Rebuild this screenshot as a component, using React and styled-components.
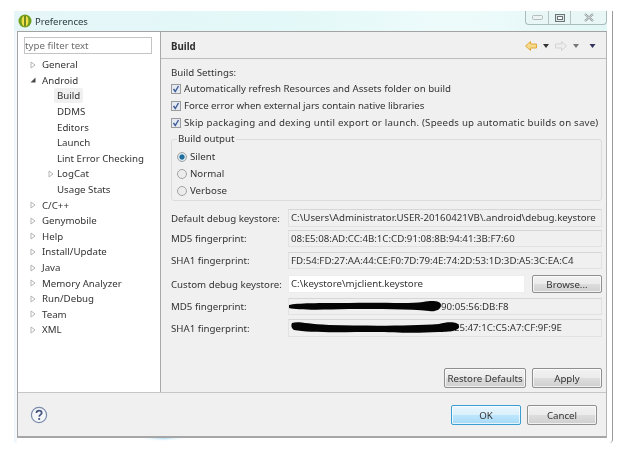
import React from "react";
import styled, { createGlobalStyle } from "styled-components";

const GlobalStyle = createGlobalStyle`
  html, body {
    margin: 0;
    padding: 0;
    background: #fff;
  }
  body {
    font-family: "Noto Sans", "Open Sans", sans-serif;
    font-size: 9.7px;
    color: #333;
  }
`;

const Page = styled.div`
  width: 644px;
  height: 456px;
  padding: 11px 0 0 14px;
  box-sizing: border-box;
  overflow: hidden;
  filter: blur(0.35px);
`;

const Frame = styled.div`
  width: 599px;
  height: 432px;
  padding-right: 5px;
  box-sizing: border-box;
  border-right: 1px solid #9a9a9a;
  border-bottom-right-radius: 4px;
  background: linear-gradient(90deg, #eef5fb 0, #f7fafd 3px, #fff 3px);
`;

const TitleBar = styled.div`
  height: 20px;
  width: 593px;
  display: flex;
  align-items: flex-start;
  background: linear-gradient(90deg, #e6f6f8 0%, #e3f8f8 45%, #eefbfb 75%, #e2f6f6 100%);
`;

const AppTitle = styled.div`
  display: flex;
  align-items: center;
  gap: 3px;
  height: 18px;
  margin: 1px 0 0 4px;
  font-size: 9.5px;
  color: #2c3a3e;
`;

const WindowButtons = styled.div`
  display: flex;
  height: 13px;
  margin-left: auto;
  border: 1px solid #a9bcbc;
  border-top: 0;
  border-radius: 0 0 4px 4px;
  background: #e9f6f6;
`;

const WindowButton = styled.div`
  width: ${(p) => p.$w}px;
  display: flex;
  align-items: center;
  justify-content: center;
  border-left: ${(p) => (p.$first ? "0" : "1px solid #b4c4c4")};
`;

const Panel = styled.div`
  width: 590px;
  height: 407px;
  margin-left: 3px;
  box-sizing: border-box;
  border: 1px solid #a3a3a3;
  border-right: 1px solid #b5b5b5;
  border-bottom: 2px solid #a6a6a6;
  background: #f0f0f0;
  display: flex;
  flex-direction: column;
`;

const BottomGlow = styled.div`
  width: 590px;
  height: 3px;
  margin-left: 3px;
  background: radial-gradient(ellipse 22px 3px at 146px 0, #b5def7 0, #eef8fd 60%, transparent 100%);
`;

const Main = styled.div`
  height: 360px;
  flex: none;
  display: flex;
  border-bottom: 1px solid #c6c6c6;
`;

const Sidebar = styled.div`
  width: 143px;
  flex: none;
  background: #fff;
  border-right: 1px solid #a8a8a8;
  padding: 5px 0 0 6px;
  box-sizing: border-box;
`;

const Filter = styled.div`
  width: 128px;
  height: 17px;
  box-sizing: border-box;
  border: 1px solid #c4c4c4;
  line-height: 15px;
  color: #6d6d6d;
  margin-bottom: 3px;
`;

const Tree = styled.ul`
  list-style: none;
  margin: 0;
  padding: 0;
`;

const TreeRow = styled.li`
  height: 15.6px;
  display: flex;
  align-items: center;
  padding-left: ${(p) => (p.$depth ? 18 + (p.$depth - 1) * 6 : 6)}px;
`;

const Twisty = styled.span`
  width: ${(p) => (p.$nested ? 9 : 12)}px;
  flex: none;
  display: flex;
  align-items: center;
`;

const TreeLabel = styled.span`
  white-space: nowrap;
  margin-left: ${(p) => (p.$depth === 1 ? 15 : 0)}px;
  padding: ${(p) => (p.$selected ? "0 3px" : "0")};
  transform: translateX(${(p) => (p.$selected ? "-3px" : "0")});
  background: ${(p) => (p.$selected ? "#f0f0f0" : "transparent")};
  border-radius: 2px;
  line-height: 15px;
`;

const Content = styled.div`
  flex: 1;
  min-width: 0;
  display: flex;
  flex-direction: column;
`;

const Header = styled.div`
  height: 27px;
  flex: none;
  box-sizing: border-box;
  display: flex;
  align-items: center;
  padding: 2px 10px 0 10px;
  border-bottom: 1px solid #bdbdbd;
`;

const HeaderTitle = styled.div`
  font-weight: 700;
  color: #2e2e2e;
`;

const Nav = styled.div`
  margin-left: auto;
  display: flex;
  align-items: center;
`;

const Body = styled.div`
  flex: 1;
  padding: 6px 4px 0 10px;
  display: flex;
  flex-direction: column;
`;

const SectionLabel = styled.div`
  height: 15px;
  line-height: 15px;
`;

const CheckRow = styled.label`
  height: 17px;
  display: flex;
  align-items: center;
  gap: 3px;
  white-space: nowrap;
  letter-spacing: ${(p) => p.$spacing || 0}px;
`;

const CheckBox = styled.span`
  width: 8px;
  height: 8px;
  flex: none;
  border: 1px solid #9b9b9b;
  background: #e4e9f2;
  display: flex;
  align-items: center;
  justify-content: center;
`;

const GroupBox = styled.fieldset`
  margin: 2px 0 3px;
  padding: 3px 0 0 5px;
  height: 68px;
  box-sizing: border-box;
  border: 1px solid #dcdcdc;
  border-radius: 3px;
  min-width: 0;
`;

const Legend = styled.legend`
  padding: 0 1px;
  line-height: 12px;
`;

const RadioRow = styled.label`
  height: 17px;
  display: flex;
  align-items: center;
  gap: 3px;
`;

const Radio = styled.span`
  width: 8px;
  height: 8px;
  flex: none;
  border-radius: 50%;
  border: 1px solid #a3a3a3;
  background: ${(p) => (p.$on ? "radial-gradient(circle, #1e6f9e 0 2.2px, #d9e6ee 3px)" : "#ececec")};
`;

const Rows = styled.div`
  margin-top: 5px;
  display: flex;
  flex-direction: column;
`;

const Row = styled.div`
  display: grid;
  grid-template-columns: 117px 314px;
  align-items: center;
  margin-top: ${(p) => p.$gap}px;
`;

const Field = styled.div`
  position: relative;
  height: ${(p) => p.$h || 18}px;
  box-sizing: border-box;
  padding-left: ${(p) => p.$inset || 2}px;
  border: 1px solid #e2e2e2;
  border-top-color: #d6d6d6;
  line-height: ${(p) => (p.$h || 18) - 2}px;
  white-space: nowrap;
  overflow: hidden;
`;

const Redaction = styled.svg`
  position: absolute;
  left: 0;
  top: 0;
`;

const KeystoreRow = styled.div`
  display: grid;
  grid-template-columns: 117px 237px 77px;
  align-items: center;
  margin-top: 6px;
`;

const KeystoreInput = styled.div`
  width: 237px;
  height: 18px;
  box-sizing: border-box;
  background: #fff;
  padding-left: 2px;
  line-height: 16px;
  border: 1px solid #ededed;
`;

const Button = styled.button`
  width: ${(p) => p.$w}px;
  height: ${(p) => p.$h || 19}px;
  padding: 0;
  font-family: inherit;
  font-size: 9.7px;
  white-space: nowrap;
  color: #333;
  border: 1px solid ${(p) => (p.$primary ? "#3a9fd0" : "#8f8f8f")};
  border-radius: 2px;
  background: ${(p) =>
    p.$primary
      ? "linear-gradient(#eaf6fd 0%, #d9f0fc 50%, #bde6fd 52%, #a7d9f5 100%)"
      : "linear-gradient(#f2f2f2 0%, #ebebeb 50%, #dddddd 52%, #cfcfcf 100%)"};
  box-shadow: inset 0 0 0 1px rgba(255, 255, 255, 0.7);
`;

const BrowseSlot = styled.div`
  display: flex;
  margin-left: 7px;
`;

const Actions = styled.div`
  display: flex;
  justify-content: flex-end;
  gap: 6px;
  margin-top: ${(p) => p.$top}px;
`;

const Footer = styled.div`
  flex: 1;
  display: flex;
  align-items: center;
  justify-content: space-between;
  padding: 1px 9px 0 12px;
`;

const NavCaret = styled.svg`
  margin-left: ${(p) => p.$ml || 0}px;
  margin-right: ${(p) => p.$mr || 0}px;
`;

const Triangle = ({ open }) => (
  <svg width="6" height="8" viewBox="0 0 6 8">
    {open ? (
      <path d="M5.5 1.5V6.5H0.5Z" fill="#4a4a4a" />
    ) : (
      <path d="M1 1L5 4L1 7Z" fill="#fff" stroke="#b5b5b5" />
    )}
  </svg>
);

const tree = [
  { label: "General", arrow: "closed" },
  { label: "Android", arrow: "open" },
  { label: "Build", depth: 1, selected: true },
  { label: "DDMS", depth: 1 },
  { label: "Editors", depth: 1 },
  { label: "Launch", depth: 1 },
  { label: "Lint Error Checking", depth: 1 },
  { label: "LogCat", depth: 2, arrow: "closed" },
  { label: "Usage Stats", depth: 1 },
  { label: "C/C++", arrow: "closed" },
  { label: "Genymobile", arrow: "closed" },
  { label: "Help", arrow: "closed" },
  { label: "Install/Update", arrow: "closed" },
  { label: "Java", arrow: "closed" },
  { label: "Memory Analyzer", arrow: "closed" },
  { label: "Run/Debug", arrow: "closed" },
  { label: "Team", arrow: "closed" },
  { label: "XML", arrow: "closed" },
];

const settings = [
  { text: "Automatically refresh Resources and Assets folder on build" },
  { text: "Force error when external jars contain native libraries", spacing: -0.05 },
  { text: "Skip packaging and dexing until export or launch. (Speeds up automatic builds on save)", spacing: 0.21 },
];

const Tick = () => (
  <svg width="8" height="8" viewBox="0 0 8 8">
    <path d="M1.5 4L3.3 6.5L6.5 1" fill="none" stroke="#3d5a94" strokeWidth="1.4" />
  </svg>
);

const EclipseLogo = () => (
  <svg width="14" height="14" viewBox="0 0 14 14">
    <circle cx="7" cy="7" r="6.5" fill="#6f9e1c" />
    <ellipse cx="7" cy="7" rx="3.4" ry="5.6" fill="#f2e24a" />
    <path d="M7 1.5V12.5" stroke="#4f7414" strokeWidth="1.6" />
  </svg>
);

const ArrowIcon = ({ dir, fill, stroke }) => (
  <svg width="12" height="10" viewBox="0 0 12 10">
    <path
      d={dir === "left" ? "M0.5 5L5.5 0.5V3H11.5V7H5.5V9.5Z" : "M11.5 5L6.5 0.5V3H0.5V7H6.5V9.5Z"}
      fill={fill}
      stroke={stroke}
    />
  </svg>
);

const Caret = ({ fill, w = 6, ml, mr }) => (
  <NavCaret width={w} height="4" viewBox="0 0 6 4" $ml={ml} $mr={mr}>
    <path d="M0 0H6L3 4Z" fill={fill} />
  </NavCaret>
);

const HelpIcon = () => (
  <svg width="18" height="18" viewBox="0 0 18 18">
    <circle cx="9" cy="9" r="7.6" fill="#f4f6fa" stroke="#7c8cab" strokeWidth="1.2" />
    <path
      d="M6.4 7C6.5 5.4 7.6 4.6 9 4.6C10.6 4.6 11.7 5.5 11.7 6.9C11.7 8.6 9.3 8.7 9.2 10.6"
      fill="none"
      stroke="#44557e"
      strokeWidth="1.7"
    />
    <circle cx="9.2" cy="13" r="1.1" fill="#44557e" />
  </svg>
);

const App = () => (
  <>
    <GlobalStyle />
    <Page>
      <Frame>
        <TitleBar>
          <AppTitle>
            <EclipseLogo />
            Preferences
          </AppTitle>
          <WindowButtons>
            <WindowButton $w={22} $first>
              <svg width="11" height="5" viewBox="0 0 11 5">
                <rect x="0.5" y="0.5" width="10" height="4" rx="1" fill="#edf3f3" stroke="#b4bcbc" />
              </svg>
            </WindowButton>
            <WindowButton $w={21}>
              <svg width="10" height="8" viewBox="0 0 10 8">
                <rect x="0.5" y="0.5" width="9" height="7" fill="#dfe6e6" stroke="#6d7676" />
                <rect x="2.5" y="2.5" width="5" height="3" fill="#f4f8f8" stroke="#6d7676" />
              </svg>
            </WindowButton>
            <WindowButton $w={35}>
              <svg width="10" height="9" viewBox="0 0 10 9">
                <path d="M1 1L9 8M9 1L1 8" stroke="#8a9393" strokeWidth="2.2" />
                <path d="M1 1L9 8M9 1L1 8" stroke="#eef2f2" strokeWidth="0.8" />
              </svg>
            </WindowButton>
          </WindowButtons>
        </TitleBar>
        <Panel>
          <Main>
            <Sidebar>
              <Filter>type filter text</Filter>
              <Tree>
                {tree.map((item) => (
                  <TreeRow key={item.label} $depth={item.depth}>
                    {item.arrow && (
                      <Twisty $nested={item.depth}>
                        <Triangle open={item.arrow === "open"} />
                      </Twisty>
                    )}
                    <TreeLabel $depth={item.depth} $selected={item.selected}>
                      {item.label}
                    </TreeLabel>
                  </TreeRow>
                ))}
              </Tree>
            </Sidebar>
            <Content>
              <Header>
                <HeaderTitle>Build</HeaderTitle>
                <Nav>
                  <ArrowIcon dir="left" fill="#f7d98c" stroke="#e0a93c" />
                  <Caret fill="#333" ml={6} mr={6} />
                  <ArrowIcon dir="right" fill="#eeeeee" stroke="#d3d3d3" />
                  <Caret fill="#777" ml={6} mr={10} />
                  <Caret fill="#33335f" w={7} />
                </Nav>
              </Header>
              <Body>
                <SectionLabel>Build Settings:</SectionLabel>
                {settings.map((item) => (
                  <CheckRow key={item.text} $spacing={item.spacing}>
                    <CheckBox>
                      <Tick />
                    </CheckBox>
                    {item.text}
                  </CheckRow>
                ))}
                <GroupBox>
                  <Legend>Build output</Legend>
                  <RadioRow>
                    <Radio $on />
                    Silent
                  </RadioRow>
                  <RadioRow>
                    <Radio />
                    Normal
                  </RadioRow>
                  <RadioRow>
                    <Radio />
                    Verbose
                  </RadioRow>
                </GroupBox>
                <Rows>
                  <Row $gap={0}>
                    <span>Default debug keystore:</span>
                    <Field>C:\Users\Administrator.USER-20160421VB\.android\debug.keystore</Field>
                  </Row>
                  <Row $gap={3}>
                    <span>MD5 fingerprint:</span>
                    <Field $h={17}>08:E5:08:AD:CC:4B:1C:CD:91:08:8B:94:41:3B:F7:60</Field>
                  </Row>
                  <Row $gap={5}>
                    <span>SHA1 fingerprint:</span>
                    <Field $h={17}>FD:54:FD:27:AA:44:CE:F0:7D:79:4E:74:2D:53:1D:3D:A5:3C:EA:C4</Field>
                  </Row>
                  <KeystoreRow>
                    <span>Custom debug keystore:</span>
                    <KeystoreInput>C:\keystore\mjclient.keystore</KeystoreInput>
                    <BrowseSlot>
                      <Button $w={70} $h={18}>Browse...</Button>
                    </BrowseSlot>
                  </KeystoreRow>
                  <Row $gap={5}>
                    <span>MD5 fingerprint:</span>
                    <Field $h={17} $inset={152}>
                      90:05:56:DB:F8
                      <Redaction width="156" height="15" viewBox="0 0 156 15">
                        <path
                          d="M0 6C8 4 30 4 60 4C90 3 120 5 134 3C144 1 152 2 152 6C152 11 146 13 140 12C120 10 90 10 60 10C30 11 8 11 0 9Z"
                          fill="#050505"
                        />
                      </Redaction>
                    </Field>
                  </Row>
                  <Row $gap={4}>
                    <span>SHA1 fingerprint:</span>
                    <Field $inset={165}>
                      E5:47:1C:C5:A7:CF:9F:9E
                      <Redaction width="172" height="16" viewBox="0 0 172 16">
                        <path
                          d="M3 3C10 1 16 4 40 5C80 6 120 6 150 4C160 1 170 2 170 6C171 11 160 12 150 12C130 13 120 13 90 12C50 12 20 13 5 10C2 8 2 5 3 3Z"
                          fill="#050505"
                        />
                      </Redaction>
                    </Field>
                  </Row>
                </Rows>
                <Actions $top={31}>
                  <Button $w={82} $h={20}>Restore Defaults</Button>
                  <Button $w={70} $h={20}>Apply</Button>
                </Actions>
              </Body>
            </Content>
          </Main>
          <Footer>
            <HelpIcon />
            <Actions $top={0}>
              <Button $w={70} $h={20} $primary>OK</Button>
              <Button $w={70} $h={20}>Cancel</Button>
            </Actions>
          </Footer>
        </Panel>
        <BottomGlow />
      </Frame>
    </Page>
  </>
);

export default App;
